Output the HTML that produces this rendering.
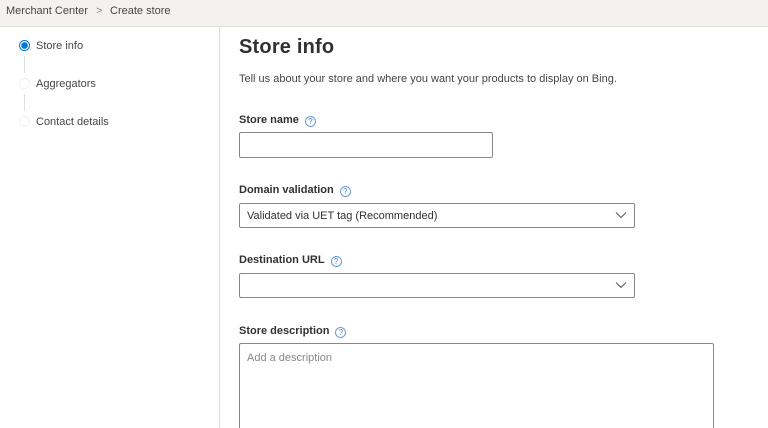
<!DOCTYPE html>
<html><head><style>
*{box-sizing:border-box;margin:0;padding:0}
html,body{width:768px;height:428px;overflow:hidden}
body{background:#fff;font-family:"Liberation Sans",sans-serif;color:#323130;position:relative}
.hdr{position:absolute;left:0;top:0;width:768px;height:27px;background:#f3f2f1;border-bottom:1px solid #e1dfdd;font-size:11px;color:#484644}
.hdr span{position:absolute;top:5px}
.side{position:absolute;left:219px;top:27px;width:1px;height:401px;background:#e1dfdd}
.step{position:absolute;left:36px;font-size:11px;color:#484644}
.rad{position:absolute;left:19px;width:11px;height:11px;border-radius:50%;border:1px solid #f0f0f0;background:#fff}
.vl{position:absolute;left:24px;width:1px;height:17px;background:#e1dfdd}
.t{position:absolute;left:239px}
.lbl{font-size:11px;font-weight:bold;color:#323130}
.q{display:inline-block;width:11px;height:11px;border:1px solid #6a9bd8;border-radius:50%;font-size:8px;color:#4a7dc4;text-align:center;line-height:9px;font-weight:normal;margin-left:6px;vertical-align:-1px}
.box{position:absolute;border:1px solid #8a8886;border-radius:2px;background:#fff;font-size:11px;color:#323130}
.chev{position:absolute;right:7px;top:7px}
</style></head><body>
<div class="hdr"><span style="left:6px">Merchant Center</span><span style="left:96px;color:#8a8886">&gt;</span><span style="left:110px">Create store</span></div>
<div class="side"></div>
<div class="rad" style="top:40px;border:1px solid #0078d4;background:radial-gradient(circle,#0078d4 0 3px,#fff 3.6px)"></div>
<div class="step" style="top:40px">Store info</div>
<div class="vl" style="top:56px"></div>
<div class="rad" style="top:78px"></div>
<div class="step" style="top:78px">Aggregators</div>
<div class="vl" style="top:94px"></div>
<div class="rad" style="top:116px"></div>
<div class="step" style="top:116px">Contact details</div>

<div class="t" style="top:36px;font-size:20px;font-weight:bold;color:#323130;letter-spacing:0.2px">Store info</div>
<div class="t" style="top:73px;font-size:11px;color:#484644">Tell us about your store and where you want your products to display on Bing.</div>

<div class="t lbl" style="top:114px">Store name<span class="q">?</span></div>
<div class="box" style="left:239px;top:132px;width:254px;height:26px"></div>

<div class="t lbl" style="top:184px">Domain validation<span class="q">?</span></div>
<div class="box" style="left:239px;top:203px;width:396px;height:25px;padding:6px 7px">Validated via UET tag (Recommended)<svg class="chev" width="12" height="8" viewBox="0 0 12 8"><path d="M1 1.5l5 5 5-5" fill="none" stroke="#605e5c" stroke-width="1.1"/></svg></div>

<div class="t lbl" style="top:254px">Destination URL<span class="q">?</span></div>
<div class="box" style="left:239px;top:273px;width:396px;height:25px"><svg class="chev" width="12" height="8" viewBox="0 0 12 8"><path d="M1 1.5l5 5 5-5" fill="none" stroke="#605e5c" stroke-width="1.1"/></svg></div>

<div class="t lbl" style="top:325px">Store description<span class="q">?</span></div>
<div class="box" style="left:239px;top:343px;width:475px;height:100px;padding:8px 7px;color:#8a8886">Add a description</div>
</body></html>
